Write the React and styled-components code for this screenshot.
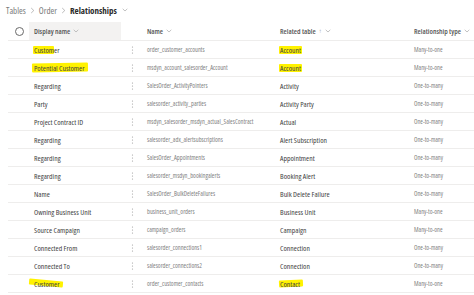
import React from "react";
import styled, { createGlobalStyle } from "styled-components";

const Global = createGlobalStyle`
  html, body { margin: 0; padding: 0; background: #fff; }
  body { font-family: "Open Sans", "Noto Sans", sans-serif; font-stretch: 75%; color: #242424; }
`;

const Page = styled.div`
  width: 474px;
  height: 295px;
  overflow: hidden;
  background: #fff;
`;

const Breadcrumb = styled.div`
  display: flex;
  align-items: center;
  gap: 4px;
  padding: 0 0 0 6px;
  height: 20px;
  font-size: 9px;
  color: #616161;
`;

const Crumb = styled.span`
  color: ${(p) => (p.$current ? "#2b2b2b" : "#7a7a7a")};
  font-weight: ${(p) => (p.$current ? 700 : 400)};
  margin-right: ${(p) => (p.$current ? 1 : 0)}px;
`;

const Sep = () => (
  <svg width="5" height="7" viewBox="0 0 5 7">
    <path d="M1.2 1 L3.8 3.5 L1.2 6" fill="none" stroke="#a8a8a8" strokeWidth="0.8" />
  </svg>
);

const Chevron = ({ c = "#a8a8a8" }) => (
  <svg width="6" height="4" viewBox="0 0 6 4">
    <path d="M0.7 0.8 L3 3 L5.3 0.8" fill="none" stroke={c} strokeWidth="0.7" />
  </svg>
);

const Table = styled.div`
  margin: 2px 0 0 8px;
`;

const Row = styled.div`
  display: grid;
  grid-template-columns: 21px 92px 22px 130px 134px 1fr;
  height: ${(p) => (p.$head ? "18px" : "17px")};
  border-bottom: 1px solid #eeedec;
  align-items: center;
`;

const Cell = styled.div`
  display: flex;
  align-items: center;
  height: 100%;
  padding-left: ${(p) => p.$pl ?? 4}px;
  gap: 3px;
  white-space: nowrap;
  font-size: ${(p) => (p.$small ? "6.4px" : "7.7px")};
  color: ${(p) => (p.$small ? "#808080" : "#444444")};
`;

const HeadCell = styled(Cell)`
  font-size: 7.4px;
  font-weight: 600;
  color: #555555;
  background: ${(p) => (p.$active ? "#f3f2f1" : "transparent")};
`;

const CheckCell = styled.div`
  display: flex;
  align-items: center;
  justify-content: center;
  height: 100%;
`;

const Circle = styled.div`
  width: 9px;
  height: 9px;
  border-radius: 50%;
  border: 1px solid #6a6a6a;
  box-sizing: border-box;
  margin-left: 1px;
`;

const KebabCell = styled.div`
  display: flex;
  align-items: center;
  justify-content: center;
  height: 100%;
  padding-left: 1px;
`;

const Kebab = () => (
  <svg width="3" height="8" viewBox="0 0 3 8">
    <circle cx="1.5" cy="1" r="0.6" fill="#9a9a9a" />
    <circle cx="1.5" cy="4" r="0.6" fill="#9a9a9a" />
    <circle cx="1.5" cy="7" r="0.6" fill="#9a9a9a" />
  </svg>
);

const Mark = styled.span`
  position: relative;
  z-index: 0;
  &::before {
    content: "";
    position: absolute;
    z-index: -1;
    left: ${(p) => p.$l}px;
    width: ${(p) => p.$w}px;
    top: ${(p) => p.$t ?? 1}px;
    height: ${(p) => p.$h ?? 8}px;
    background: #fff200;
    border-radius: 1px;
    transform: rotate(${(p) => p.$rot ?? 0}deg);
  }
`;

const Arrow = styled.span`
  font-size: 6px;
  color: #a0a0a0;
  font-weight: 400;
`;

const rows = [
  ["Customer", "order_customer_accounts", "Account", "Many-to-one", { d: { l: -1, w: 21 }, r: { l: -1, w: 23 } }],
  ["Potential Customer", "msdyn_account_salesorder_Account", "Account", "Many-to-one", { d: { l: -2, w: 56, t: 0, h: 9, rot: -1 }, r: { l: -1, w: 23 } }],
  ["Regarding", "SalesOrder_ActivityPointers", "Activity", "One-to-many"],
  ["Party", "salesorder_activity_parties", "Activity Party", "One-to-many"],
  ["Project Contract ID", "msdyn_salesorder_msdyn_actual_SalesContract", "Actual", "One-to-many"],
  ["Regarding", "salesorder_adx_alertsubscriptions", "Alert Subscription", "One-to-many"],
  ["Regarding", "SalesOrder_Appointments", "Appointment", "One-to-many"],
  ["Regarding", "salesorder_msdyn_bookingalerts", "Booking Alert", "One-to-many"],
  ["Name", "SalesOrder_BulkDeleteFailures", "Bulk Delete Failure", "One-to-many"],
  ["Owning Business Unit", "business_unit_orders", "Business Unit", "Many-to-one"],
  ["Source Campaign", "campaign_orders", "Campaign", "Many-to-one"],
  ["Connected From", "salesorder_connections1", "Connection", "One-to-many"],
  ["Connected To", "salesorder_connections2", "Connection", "One-to-many"],
  ["Customer", "order_customer_contacts", "Contact", "Many-to-one", { d: { l: -5, w: 34, t: 1, h: 6, rot: 5 }, r: { l: -1, w: 24, t: 1, h: 7, rot: -3 } }],
];

const Text = ({ children, m }) =>
  m ? (
    <Mark $l={m.l} $w={m.w} $t={m.t} $h={m.h} $rot={m.rot}>
      {children}
    </Mark>
  ) : (
    <span>{children}</span>
  );

export default function App() {
  return (
    <Page>
      <Global />
      <Breadcrumb>
        <Crumb>Tables</Crumb>
        <Sep />
        <Crumb>Order</Crumb>
        <Sep />
        <Crumb $current>Relationships</Crumb>
        <Chevron />
      </Breadcrumb>
      <Table>
        <Row $head>
          <CheckCell>
            <Circle />
          </CheckCell>
          <HeadCell $active $pl={5}>
            Display name <Chevron />
          </HeadCell>
          <div />
          <HeadCell $pl={4}>
            Name <Chevron />
          </HeadCell>
          <HeadCell $pl={7}>
            Related table <Arrow>↑</Arrow> <Chevron />
          </HeadCell>
          <HeadCell $pl={7}>
            Relationship type <Chevron />
          </HeadCell>
        </Row>
        {rows.map(([d, n, r, t, m = {}], i) => (
          <Row key={i}>
            <div />
            <Cell $pl={5}>
              <Text m={m.d}>{d}</Text>
            </Cell>
            <KebabCell>
              <Kebab />
            </KebabCell>
            <Cell $pl={4} $small>
              {n}
            </Cell>
            <Cell $pl={7}>
              <Text m={m.r}>{r}</Text>
            </Cell>
            <Cell $pl={7} $small>
              {t}
            </Cell>
          </Row>
        ))}
      </Table>
    </Page>
  );
}
